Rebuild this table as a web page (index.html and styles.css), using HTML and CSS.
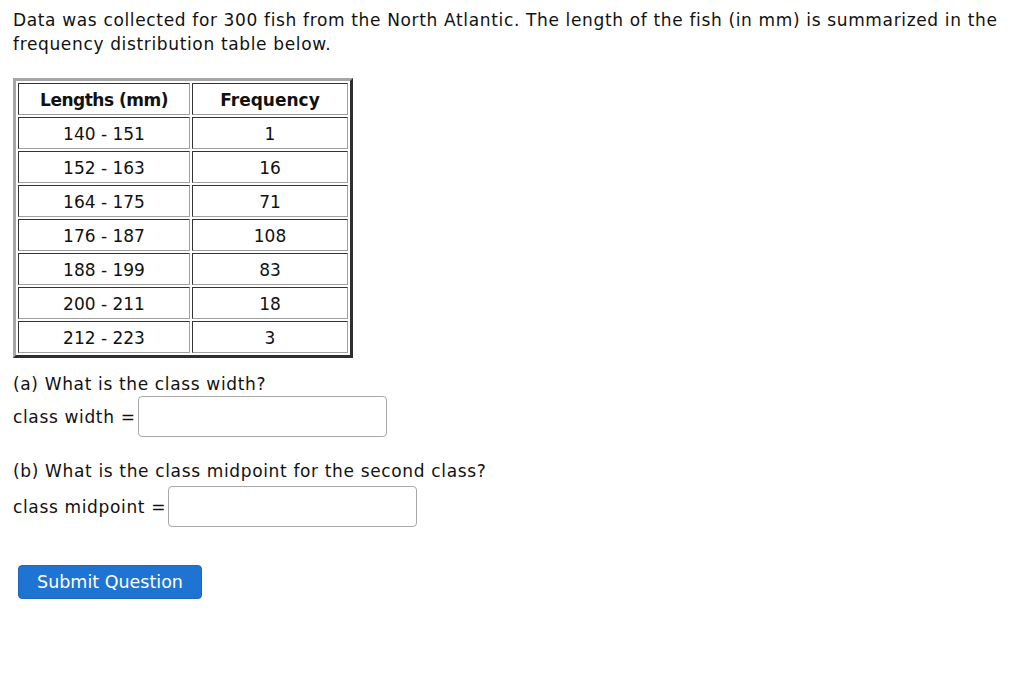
FILE: index.html
```html
<!DOCTYPE html>
<html>
<head>
<meta charset="utf-8">
<link rel="stylesheet" href="styles.css">
</head>
<body>
<div class="page">
  <p class="intro">Data was collected for 300 fish from the North Atlantic. The length of the fish (in mm) is summarized in the frequency distribution table below.</p>
  <table class="freq">
    <thead>
      <tr><th class="c1">Lengths (mm)</th><th class="c2">Frequency</th></tr>
    </thead>
    <tbody>
      <tr><td>140 - 151</td><td>1</td></tr>
      <tr><td>152 - 163</td><td>16</td></tr>
      <tr><td>164 - 175</td><td>71</td></tr>
      <tr><td>176 - 187</td><td>108</td></tr>
      <tr><td>188 - 199</td><td>83</td></tr>
      <tr><td>200 - 211</td><td>18</td></tr>
      <tr><td>212 - 223</td><td>3</td></tr>
    </tbody>
  </table>
  <p class="question qa">(a) What is the class width?</p>
  <div class="answer"><label class="label">class width =</label><input class="field" type="text"></div>
  <p class="question qb">(b) What is the class midpoint for the second class?</p>
  <div class="answer ab"><label class="label">class midpoint =</label><input class="field" type="text"></div>
  <button class="submit" type="button">Submit Question</button>
</div>
</body>
</html>
```

FILE: styles.css
```css
html, body {
  margin: 0;
  padding: 0;
  background: #fff;
}
body {
  font-family: "DejaVu Sans", Verdana, sans-serif;
  font-size: 17px;
  line-height: 24px;
  letter-spacing: 0.65px;
  color: #111;
}
.page {
  padding: 8px 13px 0 13px;
}
.intro {
  margin: 0 0 22px 0;
}
.freq {
  border-collapse: separate;
  border-spacing: 2px;
  border-style: solid;
  border-width: 3px;
  border-color: #a6a6a6 #2e2e2e #2e2e2e #a6a6a6;
  table-layout: fixed;
  width: 340px;
  letter-spacing: 0;
}
.freq .c1 { width: 172px; letter-spacing: -0.5px; }
.freq .c2 { width: 156px; }
.freq th, .freq td {
  border-style: solid;
  border-width: 1px;
  border-color: #333 #a0a0a0 #a0a0a0 #333;
  height: 32px;
  padding: 2px 0 0 0;
  text-align: center;
  vertical-align: middle;
  box-sizing: border-box;
  line-height: 24px;
}
.freq th {
  font-weight: bold;
}
.question {
  margin: 0;
}
.qa { margin-top: 14px; }
.qb { margin-top: 22px; }
.answer {
  display: flex;
  align-items: center;
  gap: 2px;
}
.ab { margin-top: 3px; }
.label {
  white-space: nowrap;
}
.field {
  width: 249px;
  height: 41px;
  box-sizing: border-box;
  border: 1px solid #a8a8a8;
  border-radius: 4px;
  background: #fff;
  margin: 0;
  font: inherit;
}
.submit {
  display: block;
  margin: 38px 0 0 5px;
  width: 184px;
  height: 34px;
  background: #1f74d3;
  color: #fff;
  border: 1px solid #1a68c0;
  border-radius: 4px;
  font-family: "DejaVu Sans", Verdana, sans-serif;
  font-size: 17.5px;
  padding: 0;
}
```
